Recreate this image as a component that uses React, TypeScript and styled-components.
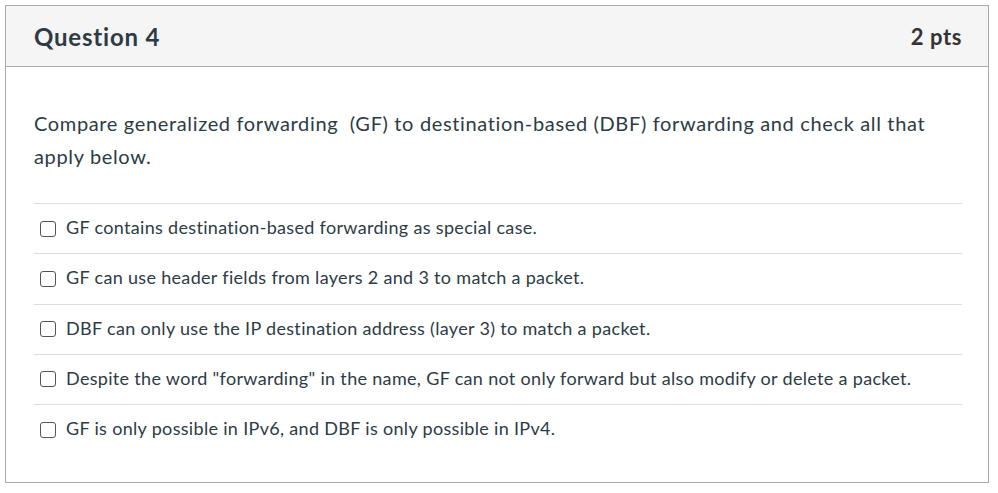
import React from "react";
import styled, { createGlobalStyle } from "styled-components";

const GlobalStyle = createGlobalStyle`
  html, body {
    margin: 0;
    padding: 0;
    background: #ffffff;
  }
  body {
    font-family: Lato, "Helvetica Neue", Arial, sans-serif;
    font-variant-ligatures: none;
    color: #2d3b45;
  }
`;

const Page = styled.div`
  padding: 5px 9px 10px 5px;
`;

const Card = styled.div`
  border: 1px solid #aaaaaa;
  background: #ffffff;
  height: 478px;
  box-sizing: border-box;
`;

const Header = styled.div`
  display: flex;
  align-items: center;
  justify-content: space-between;
  height: 61px;
  box-sizing: border-box;
  padding: 0 26px 0 28px;
  background: #f5f5f5;
  border-bottom: 1px solid #aaaaaa;
`;

const Title = styled.h2`
  margin: 0;
  font-size: 24px;
  font-weight: 700;
  letter-spacing: 0.8px;
  color: #2d3b45;
`;

const Points = styled.span`
  font-size: 22px;
  font-weight: 700;
  letter-spacing: 0.6px;
  color: #333;
`;

const Body = styled.div`
  padding: 40px 26px 28px 28px;
`;

const Prompt = styled.p`
  margin: 0 0 30px;
  font-size: 20px;
  line-height: 33px;
  letter-spacing: 0.65px;
  color: #2d3b45;
`;

const Answer = styled.label`
  display: flex;
  align-items: center;
  gap: 10px;
  height: 50.25px;
  box-sizing: border-box;
  padding: 0 0 3px 6px;
  border-top: 1px solid #dddddd;
  font-size: 18px;
  letter-spacing: 0.32px;
  color: #2d3b45;
`;

const Box = styled.span`
  width: 14px;
  height: 14px;
  margin-top: 3px;
  border: 1px solid #555;
  border-radius: 3px;
  background: #fff;
  flex-shrink: 0;
`;

const answers = [
  "GF contains destination-based forwarding as special case.",
  "GF can use header fields from layers 2 and 3 to match a packet.",
  "DBF can only use the IP destination address (layer 3) to match a packet.",
  'Despite the word "forwarding" in the name, GF can not only forward but also modify or delete a packet.',
  "GF is only possible in IPv6, and DBF is only possible in IPv4.",
];

export default function App() {
  return (
    <>
      <GlobalStyle />
      <Page>
        <Card>
          <Header>
            <Title>Question 4</Title>
            <Points>2 pts</Points>
          </Header>
          <Body>
            <Prompt>
              Compare generalized forwarding&nbsp; (GF) to destination-based (DBF) forwarding and check all that
              apply below.
            </Prompt>
            {answers.map((a) => (
              <Answer key={a}>
                <Box />
                {a}
              </Answer>
            ))}
          </Body>
        </Card>
      </Page>
    </>
  );
}
